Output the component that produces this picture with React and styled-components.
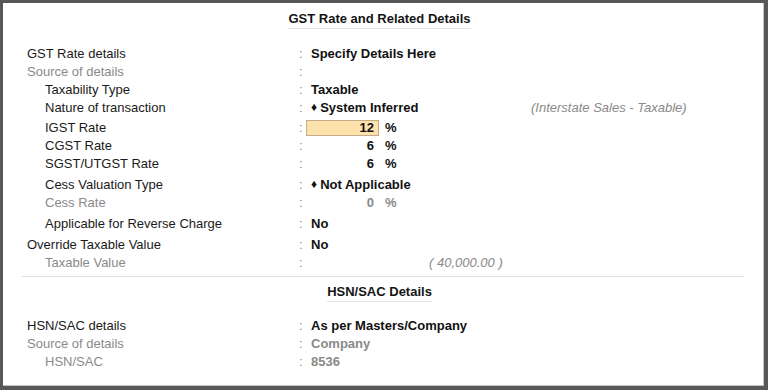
import React from 'react';
import styled, { createGlobalStyle } from 'styled-components';

const GlobalStyle = createGlobalStyle`
  body {
    margin: 0;
    font-family: "Liberation Sans", Arial, sans-serif;
    background: #575757;
  }
`;

const Frame = styled.div`
  width: 768px;
  height: 390px;
  box-sizing: border-box;
  padding: 3px 4px 4px 3px;
  background: #575757;
`;

const Panel = styled.div`
  height: 100%;
  box-sizing: border-box;
  background: #fff;
  border-right: 1px solid #c4c4c4;
  border-bottom: 1px solid #c4c4c4;
  padding-top: 8px;
  color: #141414;
  font-size: 13px;
`;

const TitleBar = styled.div`
  display: flex;
  justify-content: center;
  padding-right: 7px;
  margin-top: ${p => p.$top || 0}px;
`;

const Title = styled.div`
  font-weight: bold;
  line-height: 16px;
  padding-bottom: 1px;
  border-bottom: 1px solid #e4e4e4;
`;

const RowList = styled.div`
  margin-top: ${p => p.$top}px;
`;

const Row = styled.div`
  display: flex;
  align-items: center;
  height: ${p => p.$h || 18}px;
  line-height: 18px;
  margin-top: ${p => p.$gap || 0}px;
  padding-left: 24px;
`;

const Label = styled.div`
  width: 272px;
  box-sizing: border-box;
  padding-left: ${p => (p.$sub ? 18 : 0)}px;
  color: ${p => (p.$muted ? '#8a8a8a' : '#1a1a1a')};
  white-space: nowrap;
`;

const Colon = styled.div`
  width: 7px;
  color: #8c8c8c;
`;

const Value = styled.div`
  width: ${p => (p.$width ? `${p.$width}px` : 'auto')};
  padding-left: 5px;
  box-sizing: border-box;
  font-weight: bold;
  color: ${p => (p.$muted ? '#8a8a8a' : '#111')};
  white-space: nowrap;
`;

const Diamond = styled.span`
  font-size: 12px;
  margin-right: 3px;
  position: relative;
  top: -1px;
`;

const RateBox = styled.div`
  width: 73px;
  height: 16px;
  box-sizing: border-box;
  line-height: 14px;
  padding-right: 4px;
  text-align: right;
  font-weight: bold;
  color: ${p => (p.$muted ? '#8a8a8a' : '#111')};
  background: ${p => (p.$active ? '#fde3ab' : 'transparent')};
  border: 1px solid ${p => (p.$active ? '#c2ae86' : 'transparent')};
`;

const Percent = styled.span`
  margin-left: 6px;
  font-weight: bold;
  color: ${p => (p.$muted ? '#8a8a8a' : '#111')};
`;

const Note = styled.div`
  font-style: italic;
  color: #8a8a8a;
  white-space: nowrap;
`;

const Separator = styled.div`
  height: 1px;
  margin: 5px 19px 0;
  background: #dedede;
`;

const Field = ({ label, sub, muted, gap, h, children }) => (
  <Row $gap={gap} $h={h}>
    <Label $sub={sub} $muted={muted}>{label}</Label>
    <Colon>:</Colon>
    {children}
  </Row>
);

const Rate = ({ label, value, active, muted, gap }) => (
  <Field label={label} sub muted={muted} gap={gap}>
    <RateBox $active={active} $muted={muted}>{value}</RateBox>
    <Percent $muted={muted}>%</Percent>
  </Field>
);

export default function App() {
  return (
    <>
      <GlobalStyle />
      <Frame>
        <Panel>
          <TitleBar>
            <Title>GST Rate and Related Details</Title>
          </TitleBar>
          <RowList $top={16}>
            <Field label="GST Rate details">
              <Value>Specify Details Here</Value>
            </Field>
            <Field label="Source of details" muted />
            <Field label="Taxability Type" sub>
              <Value>Taxable</Value>
            </Field>
            <Field label="Nature of transaction" sub>
              <Value $width={225}><Diamond>♦</Diamond>System Inferred</Value>
              <Note>(Interstate Sales - Taxable)</Note>
            </Field>
            <Rate label="IGST Rate" value="12" active gap={2} />
            <Rate label="CGST Rate" value="6" />
            <Rate label="SGST/UTGST Rate" value="6" />
            <Field label="Cess Valuation Type" sub gap={3}>
              <Value><Diamond>♦</Diamond>Not Applicable</Value>
            </Field>
            <Rate label="Cess Rate" value="0" muted />
            <Field label="Applicable for Reverse Charge" sub gap={3}>
              <Value>No</Value>
            </Field>
            <Field label="Override Taxable Value" gap={3}>
              <Value>No</Value>
            </Field>
            <Field label="Taxable Value" sub muted h={17}>
              <Value $width={123} />
              <Note>( 40,000.00 )</Note>
            </Field>
          </RowList>
          <Separator />
          <TitleBar $top={7}>
            <Title>HSN/SAC Details</Title>
          </TitleBar>
          <RowList $top={15}>
            <Field label="HSN/SAC details">
              <Value>As per Masters/Company</Value>
            </Field>
            <Field label="Source of details" muted>
              <Value $muted>Company</Value>
            </Field>
            <Field label="HSN/SAC" sub muted>
              <Value $muted>8536</Value>
            </Field>
          </RowList>
        </Panel>
      </Frame>
    </>
  );
}
